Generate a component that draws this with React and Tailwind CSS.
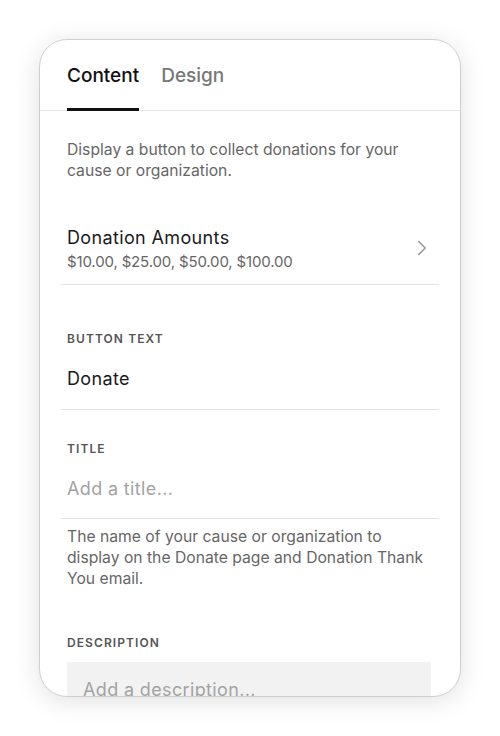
import { ChevronRight } from 'lucide-react';

const font = { fontFamily: 'Inter, "Liberation Sans", sans-serif' };

function Label({ children }) {
  return (
    <div className="text-[12px] font-semibold tracking-[0.09em] text-[#555] leading-[12px]">
      {children}
    </div>
  );
}

export default function App() {
  return (
    <div className="min-h-[736px] w-[500px] bg-white pt-[39px] pl-[39px]" style={font}>
      <div className="w-[422px] h-[658px] rounded-[28px] border border-[#cfcfcf] bg-white overflow-hidden shadow-[0_4px_26px_rgba(0,0,0,0.12)] flex flex-col">
        {/* tabs */}
        <div className="h-[71px] shrink-0 flex items-end gap-[22px] px-[27px] border-b border-[#e6e6e6]">
          <div className="flex flex-col items-stretch">
            <span className="text-[19px] font-medium text-[#111] leading-[19px]">Content</span>
            <span className="mt-[22px] h-[3px] bg-[#111] translate-y-[1px]" />
          </div>
          <div className="flex flex-col">
            <span className="text-[19px] font-medium text-[#777] leading-[19px]">Design</span>
            <span className="mt-[22px] h-[3px]" />
          </div>
        </div>

        <div className="px-[21px]">
          <p className="px-[6px] pt-[28px] text-[15.7px] leading-[21px] text-[#666]">
            Display a button to collect donations for your cause or organization.
          </p>

          {/* donation amounts */}
          <div className="mt-[44px] pb-[10px] px-[6px] flex items-center border-b border-[#e3e3e3]">
            <div className="flex-1">
              <div className="text-[18px] tracking-[0.02em] leading-[25px] text-[#1a1a1a]">Donation Amounts</div>
              <div className="text-[15px] tracking-[-0.01em] leading-[24px] text-[#666]">$10.00, $25.00, $50.00, $100.00</div>
            </div>
            <ChevronRight className="w-[26px] h-[26px] text-[#9a9a9a] mr-[-2px] mt-[-4px]" strokeWidth={1.5} />
          </div>

          {/* button text */}
          <div className="px-[6px] pt-[48px]">
            <Label>BUTTON TEXT</Label>
          </div>
          <div className="px-[6px] pt-[22px] pb-[18px] text-[18px] tracking-[0.02em] leading-[24px] text-[#1a1a1a] border-b border-[#e3e3e3]">
            Donate
          </div>

          {/* title */}
          <div className="px-[6px] pt-[33px]">
            <Label>TITLE</Label>
          </div>
          <div className="px-[6px] pt-[22px] pb-[17px] text-[18px] tracking-[0.02em] leading-[24px] text-[#a3a3a3] border-b border-[#e3e3e3]">
            Add a title...
          </div>
          <p className="px-[6px] pt-[7px] text-[15.7px] leading-[21px] text-[#666]">
            The name of your cause or organization to display on the Donate page and Donation Thank You email.
          </p>

          {/* description */}
          <div className="px-[6px] pt-[48px]">
            <Label>DESCRIPTION</Label>
          </div>
          <div className="ml-[6px] mr-[8px] mt-[13px] h-[80px] bg-[#f2f2f2] px-[16px] pt-[16px] text-[18px] tracking-[0.02em] leading-[24px] text-[#a3a3a3]">
            Add a description...
          </div>
        </div>
      </div>
    </div>
  );
}
